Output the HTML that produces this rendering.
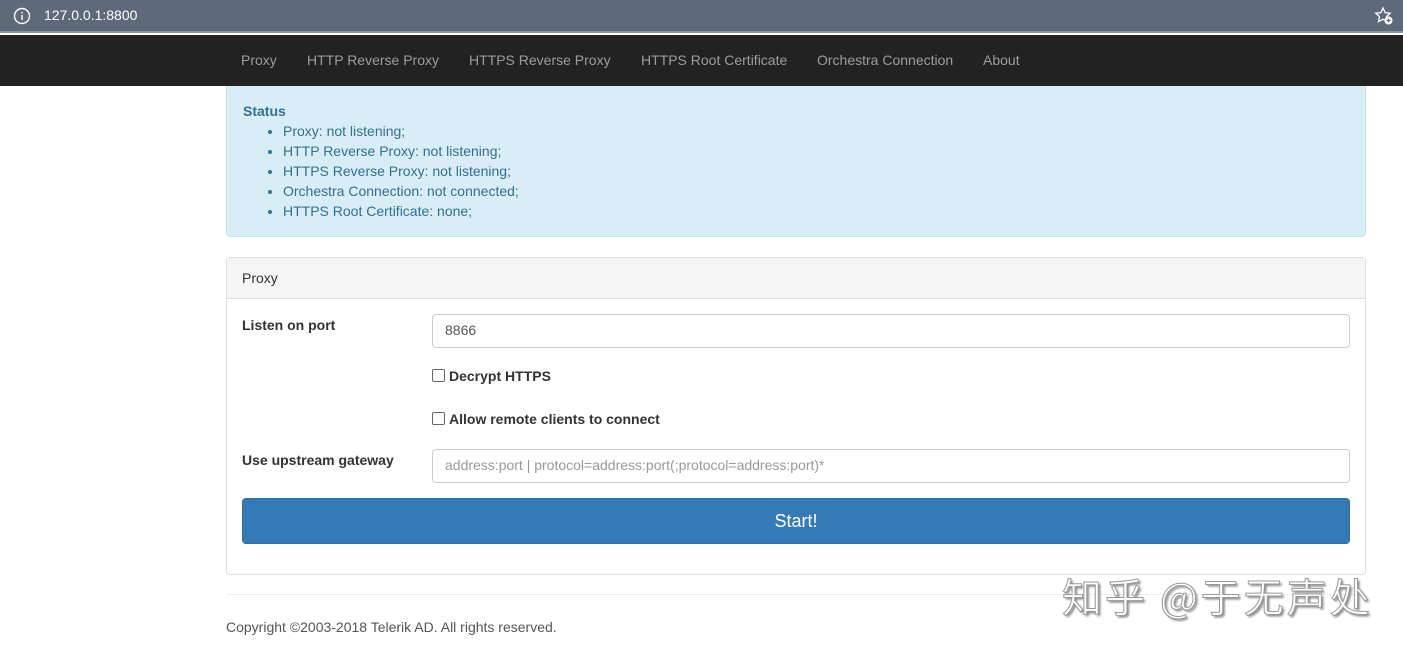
<!DOCTYPE html>
<html><head><meta charset="utf-8"><style>
*{box-sizing:border-box}
body{margin:0;width:1403px;height:648px;overflow:hidden;background:#fff;font-family:"Liberation Sans",Arial,sans-serif;font-size:14px;color:#333;position:relative}
.bar{position:absolute;left:0;top:0;width:1403px;height:33px;background:#5e6a79;border-bottom:2px solid #8a949f}
.bar .url{position:absolute;left:44px;top:7px;color:#fff;font-size:14px}
.nav{position:absolute;left:0;top:35px;width:1403px;height:51px;background:#222}
.nav span{position:absolute;top:17px;color:#9d9d9d;font-size:14px}
.alert{position:absolute;left:226px;top:86px;width:1140px;height:151px;background:#d9edf7;border:1px solid #bce8f1;border-top:none;border-radius:0 0 4px 4px;color:#31708f}
.alert b{position:absolute;left:16px;top:17px}
.alert ul{position:absolute;left:16px;top:35px;margin:0;padding-left:40px;line-height:20px}
.panel{position:absolute;left:226px;top:257px;width:1140px;height:318px;border:1px solid #ddd;border-radius:4px}
.ph{height:41px;background:#f5f5f5;border-bottom:1px solid #ddd;padding:12px 15px}
.lbl{position:absolute;left:15px;font-weight:bold}
.inp{position:absolute;left:205px;width:918px;height:34px;border:1px solid #ccc;border-radius:4px;padding:7px 12px}
.cb{position:absolute;left:205px;font-weight:bold}
.cb i{display:inline-block;width:13px;height:13px;border:1px solid #666;border-radius:2px;vertical-align:-1px;margin-right:4px}
.btn{position:absolute;left:15px;top:240px;width:1108px;height:46px;background:#337ab7;border:1px solid #2e6da4;border-radius:4px;color:#fff;font-size:18px;text-align:center;line-height:44px}
hr{position:absolute;left:226px;top:594px;width:1140px;margin:0;border:0;border-top:1px solid #eee}
.foot{position:absolute;left:226px;top:619px;color:#555}
.wm{position:absolute;left:1062px;top:566px;font-family:"Noto Sans CJK SC",sans-serif;font-size:40px;color:#fff;-webkit-text-stroke:1px #999;text-shadow:2px 2px 2px #888;letter-spacing:3px}
</style></head><body>
<div class="bar"><svg style="position:absolute;left:13px;top:7px" width="18" height="18"><circle cx="9" cy="9" r="7.5" fill="none" stroke="#fff" stroke-width="1.4"/><rect x="8.3" y="8" width="1.4" height="5" fill="#fff"/><rect x="8.3" y="5" width="1.4" height="1.5" fill="#fff"/></svg><span class="url">127.0.0.1:8800</span>
<svg style="position:absolute;left:1374px;top:6px" width="20" height="20"><path d="M9 2l2.2 4.6 5 .6-3.7 3.4 1 5L9 13.2 4.5 15.6l1-5L1.8 7.2l5-.6z" fill="none" stroke="#fff" stroke-width="1.3"/><circle cx="14.5" cy="14.5" r="4" fill="#fff"/><path d="M12.5 14.5h4M14.5 12.5v4" stroke="#5e6a79" stroke-width="1.3"/></svg></div>
<div class="nav"><span style="left:241px">Proxy</span><span style="left:307px">HTTP Reverse Proxy</span><span style="left:469px">HTTPS Reverse Proxy</span><span style="left:641px">HTTPS Root Certificate</span><span style="left:817px">Orchestra Connection</span><span style="left:983px">About</span></div>
<div class="alert"><b>Status</b><ul><li>Proxy: not listening;</li><li>HTTP Reverse Proxy: not listening;</li><li>HTTPS Reverse Proxy: not listening;</li><li>Orchestra Connection: not connected;</li><li>HTTPS Root Certificate: none;</li></ul></div>
<div class="panel"><div class="ph">Proxy</div>
<div class="lbl" style="top:59px">Listen on port</div>
<div class="inp" style="top:56px;color:#555">8866</div>
<div class="cb" style="top:110px"><i></i>Decrypt HTTPS</div>
<div class="cb" style="top:153px"><i></i>Allow remote clients to connect</div>
<div class="lbl" style="top:194px">Use upstream gateway</div>
<div class="inp" style="top:191px;color:#999">address:port | protocol=address:port(;protocol=address:port)*</div>
<div class="btn">Start!</div></div>
<hr><div class="foot">Copyright ©2003-2018 Telerik AD. All rights reserved.</div>
<div class="wm">知乎 @于无声处</div>
</body></html>
